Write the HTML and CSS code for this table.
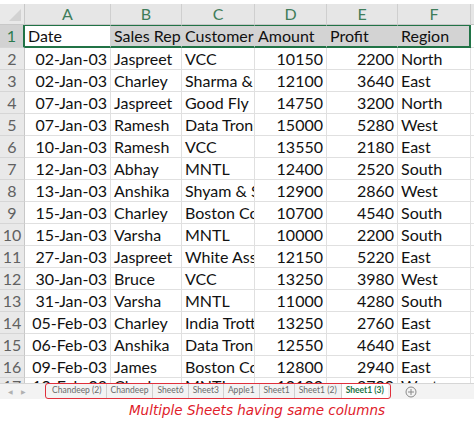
FILE: index.html
```html
<!DOCTYPE html>
<html>
<head>
<meta charset="utf-8">
<link rel="stylesheet" href="styles.css">
</head>
<body>
<div class="sheet">
  <div class="grid">
    <div class="corner"><span class="tri"></span></div>
    <div class="ch sel">A</div><div class="ch sel">B</div><div class="ch sel">C</div><div class="ch sel">D</div><div class="ch sel">E</div><div class="ch sel">F</div><div class="tail hd"></div>

    <div class="rh selr">1</div>
    <div class="c h1 act">Date</div><div class="c h1">Sales Rep</div><div class="c h1">Customer</div><div class="c h1">Amount</div><div class="c h1">Profit</div><div class="c h1 lastc">Region</div><div class="tail"></div>

    <div class="rh">2</div><div class="c r">02-Jan-03</div><div class="c">Jaspreet</div><div class="c">VCC</div><div class="c r">10150</div><div class="c r">2200</div><div class="c">North</div><div class="tail"></div>
    <div class="rh">3</div><div class="c r">02-Jan-03</div><div class="c">Charley</div><div class="c">Sharma &amp; Sons</div><div class="c r">12100</div><div class="c r">3640</div><div class="c">East</div><div class="tail"></div>
    <div class="rh">4</div><div class="c r">07-Jan-03</div><div class="c">Jaspreet</div><div class="c">Good Fly</div><div class="c r">14750</div><div class="c r">3200</div><div class="c">North</div><div class="tail"></div>
    <div class="rh">5</div><div class="c r">07-Jan-03</div><div class="c">Ramesh</div><div class="c">Data Tronics</div><div class="c r">15000</div><div class="c r">5280</div><div class="c">West</div><div class="tail"></div>
    <div class="rh">6</div><div class="c r">10-Jan-03</div><div class="c">Ramesh</div><div class="c">VCC</div><div class="c r">13550</div><div class="c r">2180</div><div class="c">East</div><div class="tail"></div>
    <div class="rh">7</div><div class="c r">12-Jan-03</div><div class="c">Abhay</div><div class="c">MNTL</div><div class="c r">12400</div><div class="c r">2520</div><div class="c">South</div><div class="tail"></div>
    <div class="rh">8</div><div class="c r">13-Jan-03</div><div class="c">Anshika</div><div class="c">Shyam &amp; Sons</div><div class="c r">12900</div><div class="c r">2860</div><div class="c">West</div><div class="tail"></div>
    <div class="rh">9</div><div class="c r">15-Jan-03</div><div class="c">Charley</div><div class="c">Boston Consulting</div><div class="c r">10700</div><div class="c r">4540</div><div class="c">South</div><div class="tail"></div>
    <div class="rh">10</div><div class="c r">15-Jan-03</div><div class="c">Varsha</div><div class="c">MNTL</div><div class="c r">10000</div><div class="c r">2200</div><div class="c">South</div><div class="tail"></div>
    <div class="rh">11</div><div class="c r">27-Jan-03</div><div class="c">Jaspreet</div><div class="c">White Associates</div><div class="c r">12150</div><div class="c r">5220</div><div class="c">East</div><div class="tail"></div>
    <div class="rh">12</div><div class="c r">30-Jan-03</div><div class="c">Bruce</div><div class="c">VCC</div><div class="c r">13250</div><div class="c r">3980</div><div class="c">West</div><div class="tail"></div>
    <div class="rh">13</div><div class="c r">31-Jan-03</div><div class="c">Varsha</div><div class="c">MNTL</div><div class="c r">11000</div><div class="c r">4280</div><div class="c">South</div><div class="tail"></div>
    <div class="rh">14</div><div class="c r">05-Feb-03</div><div class="c">Charley</div><div class="c">India Trotters</div><div class="c r">13250</div><div class="c r">2760</div><div class="c">East</div><div class="tail"></div>
    <div class="rh">15</div><div class="c r">06-Feb-03</div><div class="c">Anshika</div><div class="c">Data Tronics</div><div class="c r">12550</div><div class="c r">4640</div><div class="c">East</div><div class="tail"></div>
    <div class="rh">16</div><div class="c r">09-Feb-03</div><div class="c">James</div><div class="c">Boston Consulting</div><div class="c r">12800</div><div class="c r">2940</div><div class="c">East</div><div class="tail"></div>
    <div class="rh last">17</div><div class="c r last">10-Feb-03</div><div class="c last">Charley</div><div class="c last">MNTL</div><div class="c r last">10100</div><div class="c r last">2700</div><div class="c last">West</div><div class="tail"></div>
  </div>

  <div class="tabbar">
    <div class="nav"><span>&#9664;</span><span>&#9654;</span></div>
    <div class="tabs">
      <span class="tab">Chandeep (2)</span>
      <span class="tab">Chandeep</span>
      <span class="tab">Sheet6</span>
      <span class="tab">Sheet3</span>
      <span class="tab">Apple1</span>
      <span class="tab">Sheet1</span>
      <span class="tab">Sheet1 (2)</span>
      <span class="tab active">Sheet1 (3)</span>
    </div>
    <div class="add">
      <svg width="12" height="12" viewBox="0 0 12 12"><circle cx="6" cy="6" r="5" fill="none" stroke="#8a8a8a" stroke-width="1"/><path d="M6 3v6M3 6h6" stroke="#8a8a8a" stroke-width="1"/></svg>
    </div>
  </div>

  <div class="caption">Multiple Sheets having same columns</div>
</div>
</body>
</html>
```

FILE: styles.css
```css
html, body {
  margin: 0;
  padding: 0;
  background: #ffffff;
}

.sheet {
  width: 474px;
  height: 426px;
  overflow: hidden;
  padding-top: 4px;
  box-sizing: border-box;
  font-family: "Lato", "Noto Sans", sans-serif;
}

.grid {
  display: grid;
  grid-template-columns: 25px 86px 71px 73px 72px 71px 73px 3px;
  grid-template-rows: 21px 23px repeat(16, 22px);
  height: 379px;
  overflow: hidden;
}

.corner {
  background: #e9e9e9;
  border-right: 1px solid #c8c8c8;
  border-bottom: 1px solid #c8c8c8;
  position: relative;
}

.tri {
  position: absolute;
  right: 3px;
  bottom: 3px;
  width: 0;
  height: 0;
  border-left: 12px solid transparent;
  border-bottom: 12px solid #d2d2d2;
}

.ch {
  background: #e6e6e6;
  color: #3f7d5a;
  font-size: 16px;
  text-align: center;
  line-height: 20px;
  border-right: 1px solid #cfcfcf;
  border-bottom: 1px solid #c8c8c8;
}

.tail {
  border-bottom: 1px solid #e2e2e2;
}

.tail.hd {
  background: #e6e6e6;
  border-bottom: 1px solid #c8c8c8;
}

.rh {
  background: #e9e9e9;
  color: #616161;
  font-size: 16px;
  text-align: center;
  line-height: 21px;
  border-right: 1px solid #c8c8c8;
  border-bottom: 1px solid #d6d6d6;
}

.rh.selr {
  background: #d2d2d2;
  color: #2c7b4f;
  border-right: 2px solid #217346;
  line-height: 22px;
}

.c {
  font-size: 16px;
  color: #111;
  line-height: 21px;
  padding: 0 3px;
  white-space: nowrap;
  overflow: hidden;
  border-right: 1px solid #e0e0e0;
  border-bottom: 1px solid #e0e0e0;
}

.c.last,
.rh.last {
  line-height: 15px;
}

.c.r {
  text-align: right;
}

.h1 {
  background: #d3d3d3;
  border-right-color: #d3d3d3;
  border-top: 1px solid #217346;
  border-bottom: 2px solid #217346;
  line-height: 20px;
}

.h1.act {
  background: #ffffff;
}

.h1.lastc {
  border-right: 2px solid #217346;
}

.tabbar {
  display: flex;
  align-items: center;
  height: 15px;
  background: #f3f3f3;
  border-top: 1px solid #d6d6d6;
}

.nav {
  width: 45px;
  display: flex;
  gap: 8px;
  padding-left: 8px;
  box-sizing: border-box;
  font-size: 6px;
  color: #b0b0b0;
}

.tabs {
  display: flex;
  border: 1.5px solid #e0303c;
  border-radius: 3px;
  height: 16px;
  box-sizing: border-box;
  margin-top: -2px;
  padding: 0 2px;
  align-items: stretch;
}

.tab {
  font-family: "Lato", sans-serif;
  font-size: 8.5px;
  color: #6a6a6a;
  padding: 0 4px;
  line-height: 12px;
  border-right: 1px solid #cfcfcf;
}

.tab.active {
  background: #ffffff;
  color: #217346;
  font-weight: bold;
  border-right: none;
}

.add {
  margin-left: 14px;
  display: flex;
  align-items: center;
}

.caption {
  text-align: center;
  color: #e0202a;
  font-family: "DejaVu Sans", sans-serif;
  font-style: italic;
  font-size: 13.5px;
  margin-top: 3px;
  padding-left: 40px;
}
```
